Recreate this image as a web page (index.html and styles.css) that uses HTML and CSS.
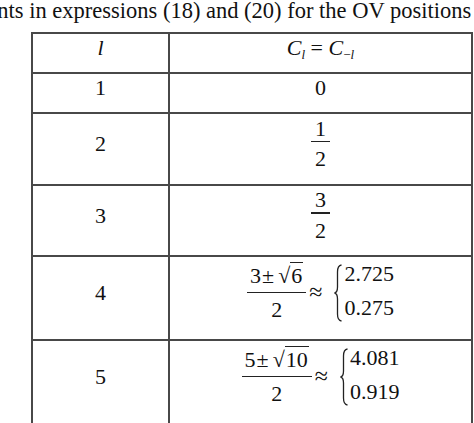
FILE: index.html
```html
<!DOCTYPE html>
<html>
<head>
<meta charset="utf-8">
<link rel="stylesheet" href="styles.css">
</head>
<body>
<div class="caption">coefficients in expressions (18) and (20) for the OV positions</div>
<table class="tbl">
  <tr class="r-head">
    <td class="c1"><i>l</i></td>
    <td class="c2"><i>C</i><sub><i>l</i></sub> = <i>C</i><sub>−<i>l</i></sub></td>
  </tr>
  <tr class="r-1">
    <td class="c1">1</td>
    <td class="c2">0</td>
  </tr>
  <tr class="r-2">
    <td class="c1">2</td>
    <td class="c2"><span class="frac"><span class="num">1</span><span class="bar"></span><span class="den">2</span></span></td>
  </tr>
  <tr class="r-3">
    <td class="c1">3</td>
    <td class="c2"><span class="frac"><span class="num">3</span><span class="bar"></span><span class="den">2</span></span></td>
  </tr>
  <tr class="r-4">
    <td class="c1">4</td>
    <td class="c2">
      <span class="expr">
        <span class="frac wide"><span class="num">3<span class="pm">±</span><span class="rad">√</span><span class="under">6</span></span><span class="bar"></span><span class="den">2</span></span>
        <span class="approx">≈</span>
        <svg class="brace" width="8" height="58" viewBox="0 0 8 58"><path d="M7.5 1 Q3.5 1.5 3.5 8 L3.5 23 Q3.5 28.5 0.5 29 Q3.5 29.5 3.5 35 L3.5 50 Q3.5 56.5 7.5 57" fill="none" stroke="#222" stroke-width="1.3"/></svg>
        <span class="vals"><span>2.725</span><span>0.275</span></span>
      </span>
    </td>
  </tr>
  <tr class="r-5">
    <td class="c1">5</td>
    <td class="c2">
      <span class="expr">
        <span class="frac wide"><span class="num">5<span class="pm">±</span><span class="rad">√</span><span class="under">10</span></span><span class="bar"></span><span class="den">2</span></span>
        <span class="approx">≈</span>
        <svg class="brace" width="8" height="58" viewBox="0 0 8 58"><path d="M7.5 1 Q3.5 1.5 3.5 8 L3.5 23 Q3.5 28.5 0.5 29 Q3.5 29.5 3.5 35 L3.5 50 Q3.5 56.5 7.5 57" fill="none" stroke="#222" stroke-width="1.3"/></svg>
        <span class="vals"><span>4.081</span><span>0.919</span></span>
      </span>
    </td>
  </tr>
</table>
</body>
</html>
```

FILE: styles.css
```css
html, body {
  margin: 0;
  padding: 0;
  background: #fff;
  overflow: hidden;
}

body {
  font-family: "Liberation Serif", "Times New Roman", serif;
  color: #111;
  font-size: 22px;
}

.caption {
  white-space: nowrap;
  font-size: 22.5px;
  height: 32px;
  line-height: 22px;
  margin-left: -81px;
}

.tbl {
  margin-left: 31px;
  width: 442px;
  border-collapse: collapse;
  border: 2px solid #484848;
}

.tbl td {
  border: 2px solid #484848;
  text-align: center;
  vertical-align: middle;
  padding: 0 0 10px;
}

.c1 {
  width: 135px;
}

.r-head { height: 40px; }
.r-1 { height: 40px; }
.r-2 { height: 72px; }
.r-3 { height: 71px; }
.r-4 { height: 84px; }
.r-5 { height: 84px; }

sub {
  font-size: 13px;
  vertical-align: -4px;
  line-height: 0;
}

.frac {
  display: inline-flex;
  flex-direction: column;
  align-items: center;
  vertical-align: middle;
  line-height: 22px;
}

.frac .bar {
  align-self: stretch;
  height: 1.5px;
  background: #222;
  margin: 1px -2px 6px;
}

.frac.wide .bar {
  margin: 5px 0 6px;
}

.num, .den {
  padding: 0 2px;
}

.frac.wide .num {
  padding: 0 3px;
}

.pm {
  margin: 0 2px 0 1px;
}

.rad {
  margin-left: 2px;
}

.under {
  border-top: 1.5px solid #222;
  padding: 0 1px;
}

.expr {
  display: inline-flex;
  align-items: center;
}

.approx {
  margin: 0 12px 0 3px;
  font-size: 24px;
  position: relative;
  top: -1px;
}

.brace {
  display: block;
}

.vals {
  display: inline-flex;
  flex-direction: column;
  align-items: flex-start;
  line-height: 34px;
  margin-left: 2px;
  position: relative;
  top: -2px;
}
```
